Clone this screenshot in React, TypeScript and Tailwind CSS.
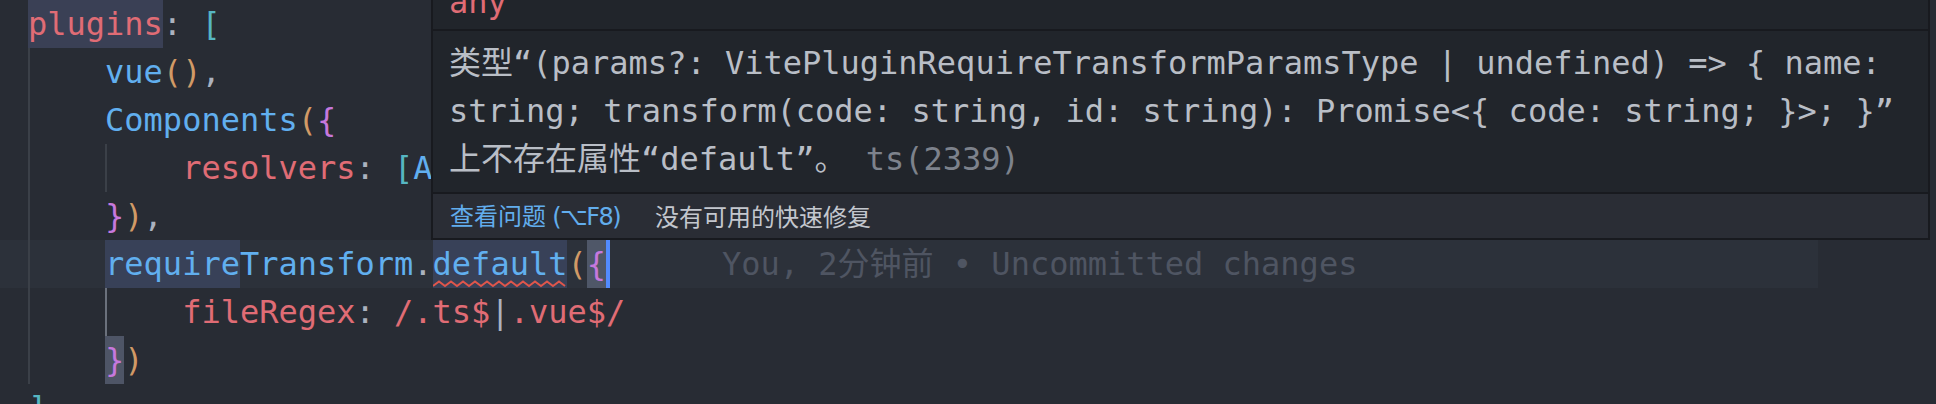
import React from 'react';

type Tok = { t: string; c: string };

const tk = (t: string, c: string): Tok => ({ t, c });

const RED = 'text-[#e06c75]';
const BLUE = 'text-[#61afef]';
const GRAY = 'text-[#abb2bf]';
const TEAL = 'text-[#56b6c2]';
const ORANGE = 'text-[#d19a66]';
const PURPLE = 'text-[#c678dd]';

function Guide({ active }: { active?: boolean }) {
  return (
    <span className={active ? 'shadow-[inset_2px_0_0_#6b717c]' : 'shadow-[inset_2px_0_0_#3b4048]'}>
      {'    '}
    </span>
  );
}

function Toks({ items }: { items: Tok[] }) {
  return (
    <>
      {items.map((x, i) => (
        <span key={i} className={x.c}>
          {x.t}
        </span>
      ))}
    </>
  );
}

function Row({ children, className = '' }: { children: React.ReactNode; className?: string }) {
  return <div className={`flex h-[48px] shrink-0 whitespace-pre pl-[28px] leading-[48px] ${className}`}>{children}</div>;
}

function Squiggle() {
  // repeating zigzag under the error token
  const pts: string[] = [];
  for (let x = 0; x <= 136; x += 6) {
    pts.push(`${x},${(x / 6) % 2 === 0 ? 6 : 1.5}`);
  }
  return (
    <svg className="absolute bottom-0 left-0" width="134" height="8" viewBox="0 0 134 8">
      <polyline points={pts.join(' ')} fill="none" stroke="#e0564b" strokeWidth="2" />
    </svg>
  );
}

function Hover() {
  return (
    <div className="absolute left-[431px] top-0 w-[1499px] border-x-2 border-b-2 border-[#181a1f] bg-[#21252b]">
      {/* signature part, scrolled off the top */}
      <div className="h-[29px] overflow-hidden pl-4">
        <div className="-mt-[22px] text-[32px] leading-[48px] text-[#e06c75]">any</div>
      </div>

      {/* Message */}
      <div className="border-t-2 border-[#181a1f] pb-[9px] pl-4 pr-4 pt-2 text-[32px] leading-[48px] text-[#b9bec6] whitespace-pre">
        <div>类型“(params?: VitePluginRequireTransformParamsType | undefined) =&gt; {'{'} name:</div>
        <div>string; transform(code: string, id: string): Promise&lt;{'{'} code: string; {'}'}&gt;; {'}'}”</div>
        <div>
          上不存在属性“default”。 <span className="text-[#7d828c]">ts(2339)</span>
        </div>
      </div>

      {/* Status bar */}
      <div className="flex h-[46px] items-center border-t-2 border-[#181a1f] bg-[#2a2d35] pl-[17px] font-['Noto_Sans_CJK_SC',sans-serif] text-[24px]">
        <span className="w-[173px] shrink-0 whitespace-pre text-[#62aded]">
          查看问题<span className="font-['DejaVu_Sans',sans-serif] tracking-[-1.5px]"> (⌥F8)</span>
        </span>
        <span className="ml-[32px] text-[#c3c7ce]">没有可用的快速修复</span>
      </div>
    </div>
  );
}

export default function App() {
  return (
    <div className="relative h-[404px] w-[1936px] overflow-hidden bg-[#282c34] font-['DejaVu_Sans_Mono','Noto_Sans_CJK_SC',monospace] text-[32px]">
      <div className="flex flex-col">
        <Row>
          <span className="bg-[#3a4055] text-[#e06c75]">plugins</span>
          <Toks items={[tk(': ', GRAY), tk('[', TEAL)]} />
        </Row>
        <Row>
          <Guide />
          <Toks items={[tk('vue', BLUE), tk('()', ORANGE), tk(',', GRAY)]} />
        </Row>
        <Row>
          <Guide />
          <Toks items={[tk('Components', BLUE), tk('(', ORANGE), tk('{', PURPLE)]} />
        </Row>
        <Row>
          <Guide />
          <Guide />
          <Toks
            items={[
              tk('resolvers', RED),
              tk(': ', GRAY),
              tk('[', TEAL),
              tk('AntDesignVueResolver', BLUE),
              tk('()', ORANGE),
              tk(']', TEAL),
              tk(',', GRAY),
            ]}
          />
        </Row>
        <Row>
          <Guide />
          <Toks items={[tk('}', PURPLE), tk(')', ORANGE), tk(',', GRAY)]} />
        </Row>

        {/* Current line */}
        <Row className="w-[1818px] bg-[#2c313a]">
          <Guide />
          <span className="bg-[#384158] text-[#61afef]">require</span>
          <Toks items={[tk('Transform', BLUE), tk('.', GRAY)]} />
          <span className="relative bg-[#384158] text-[#61afef]">
            default
            <Squiggle />
          </span>
          <span className={ORANGE}>(</span>
          <span className="bg-[#4f5768] text-[#c678dd]">{'{'}</span>
          <span className="w-[4px] bg-[#528bff]" />
          <span className="ml-[112px] text-[#4f5562]">You, 2分钟前 • Uncommitted changes</span>
        </Row>

        <Row>
          <Guide />
          <Guide active />
          <Toks
            items={[tk('fileRegex', RED), tk(': ', GRAY), tk('/.ts$', RED), tk('|', GRAY), tk('.vue$/', RED)]}
          />
        </Row>
        <Row>
          <Guide />
          <span className="bg-[#4e5566] text-[#c678dd]">{'}'}</span>
          <span className={ORANGE}>)</span>
        </Row>
        <Row>
          <span className={TEAL}>]</span>
        </Row>
      </div>

      <Hover />
    </div>
  );
}
